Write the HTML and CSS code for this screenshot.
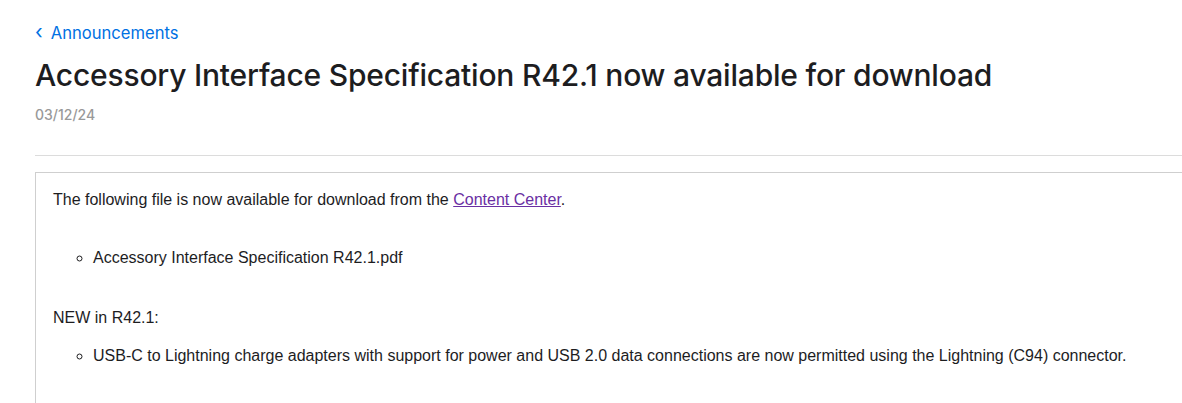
FILE: index.html
```html
<!DOCTYPE html>
<html lang="en">
<head>
<meta charset="utf-8">
<title>Accessory Interface Specification R42.1</title>
<link rel="stylesheet" href="styles.css">
</head>
<body>
<main class="page">
  <a class="back" href="#"><span class="chev">&lsaquo;</span>Announcements</a>
  <h1 class="title">Accessory Interface Specification R42.1 now available for download</h1>
  <div class="date">03/12/24</div>
  <hr class="rule">
  <section class="box">
    <p class="intro">The following file is now available for download from the <a class="cc" href="#">Content Center</a>.</p>
    <ul class="files">
      <li>Accessory Interface Specification R42.1.pdf</li>
    </ul>
    <p class="new">NEW in R42.1:</p>
    <ul class="changes">
      <li>USB-C to Lightning charge adapters with support for power and USB 2.0 data connections are now permitted using the Lightning (C94) connector.</li>
    </ul>
  </section>
</main>
</body>
</html>
```
FILE: styles.css
```css
html, body {
  margin: 0;
  padding: 0;
  background: #fff;
  overflow: hidden;
}
body {
  font-family: Inter, "Liberation Sans", Arial, sans-serif;
  color: #1d1d1f;
}
.page {
  width: 1200px;
  padding: 22px 0 0 35px;
}
.back {
  display: flex;
  align-items: center;
  gap: 8px;
  height: 22px;
  font-size: 16.6px;
  line-height: 22px;
  color: #0071e3;
  text-decoration: none;
}
.chev {
  font-size: 20px;
  line-height: 22px;
  position: relative;
  top: -1px;
}
.title {
  margin: 12px 0 0;
  font-size: 30px;
  line-height: 38px;
  font-weight: 500;
  letter-spacing: -0.2px;
  color: #1d1d1f;
}
.date {
  margin-top: 12px;
  font-size: 14px;
  line-height: 18px;
  font-weight: 500;
  color: #999999;
}
.rule {
  margin: 31px 0 0;
  border: 0;
  border-top: 1px solid #dcdcdc;
  height: 0;
}
.box {
  margin-top: 16px;
  border: 1px solid #cfcfcf;
  padding: 17px 17px 40px;
  font-family: "Liberation Sans", Arial, sans-serif;
  font-size: 16px;
  line-height: 20px;
  color: #1d1d1f;
}
.box p {
  margin: 0;
}
.cc {
  color: #6a2fa3;
  text-decoration: underline;
}
.files {
  margin: 38px 0 0;
  padding-left: 40px;
  list-style: circle;
}
.new {
  margin-top: 40px !important;
}
.changes {
  margin: 18px 0 0;
  padding-left: 40px;
  list-style: circle;
}
```
